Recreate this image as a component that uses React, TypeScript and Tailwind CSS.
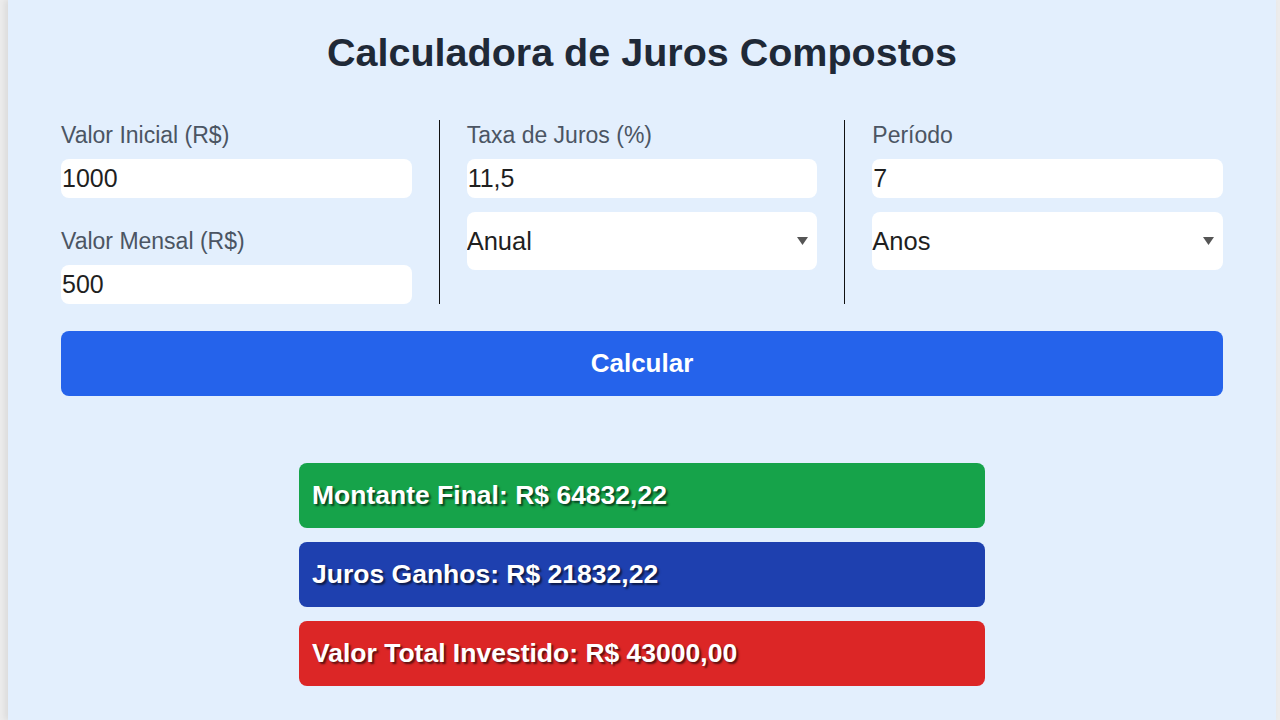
import { useState } from 'react';

const font = { fontFamily: '"Liberation Sans", Arial, sans-serif' };

function Field({ label, value, className = '' }: { label: string; value: string; className?: string }) {
  return (
    <div className={`flex flex-col ${className}`}>
      <label className="text-[23px] leading-[30px] text-[#4b5563] mb-[9px]">{label}</label>
      <input
        defaultValue={value}
        className="h-[39px] w-full rounded-[8px] bg-white px-[1px] text-[25px] text-[#1f1f1f] outline-none"
      />
    </div>
  );
}

function Select({ value, options }: { value: string; options: string[] }) {
  return (
    <div className="relative mt-[14px]">
      <select
        defaultValue={value}
        className="h-[58px] w-full appearance-none rounded-[8px] bg-white px-0 text-[25.5px] text-[#1f1f1f] outline-none"
      >
        {options.map((o) => (
          <option key={o}>{o}</option>
        ))}
      </select>
      <svg className="pointer-events-none absolute right-[9px] top-[25px]" width="11" height="8" viewBox="0 0 11 8">
        <path d="M0 0 L11 0 L5.5 8 Z" fill="#555" />
      </svg>
    </div>
  );
}

const results = [
  { label: 'Montante Final: R$ 64832,22', color: 'bg-[#16a34a]' },
  { label: 'Juros Ganhos: R$ 21832,22', color: 'bg-[#1e40af]' },
  { label: 'Valor Total Investido: R$ 43000,00', color: 'bg-[#dc2626]' },
];

export default function App() {
  const [shown] = useState(true);

  return (
    <div className="h-[720px] overflow-hidden bg-[#ececec] pl-2 pr-1" style={font}>
      <div className="h-full bg-[#e3effd] px-[53px] pt-[28px] shadow-[-3px_0_6px_rgba(0,0,0,0.08)]">
        <h1 className="text-center text-[39.5px] font-bold leading-[48px] text-[#1f2937]">
          Calculadora de Juros Compostos
        </h1>

        <div className="mt-[44px] grid grid-cols-[1fr_1px_1fr_1px_1fr] gap-x-[27px]">
          <div className="flex flex-col">
            <Field label="Valor Inicial (R$)" value="1000" />
            <Field label="Valor Mensal (R$)" value="500" className="mt-[28px]" />
          </div>
          <div className="bg-[#111]" />
          <div className="flex flex-col">
            <Field label="Taxa de Juros (%)" value="11,5" />
            <Select value="Anual" options={['Anual', 'Mensal']} />
          </div>
          <div className="bg-[#111]" />
          <div className="flex flex-col">
            <Field label="Período" value="7" />
            <Select value="Anos" options={['Anos', 'Meses']} />
          </div>
        </div>

        <button className="mt-[27px] h-[65px] w-full rounded-[8px] bg-[#2563eb] text-[26px] font-bold text-white">
          Calcular
        </button>

        {shown && (
          <div className="mx-auto mt-[67px] flex w-[686px] flex-col gap-[14px]">
            {results.map((r) => (
              <div
                key={r.label}
                className={`flex h-[65px] items-center rounded-[8px] px-[13px] pt-px text-[26.5px] font-bold text-white [text-shadow:2px_2px_2px_rgba(0,0,0,0.6)] ${r.color}`}
              >
                {r.label}
              </div>
            ))}
          </div>
        )}
      </div>
    </div>
  );
}
